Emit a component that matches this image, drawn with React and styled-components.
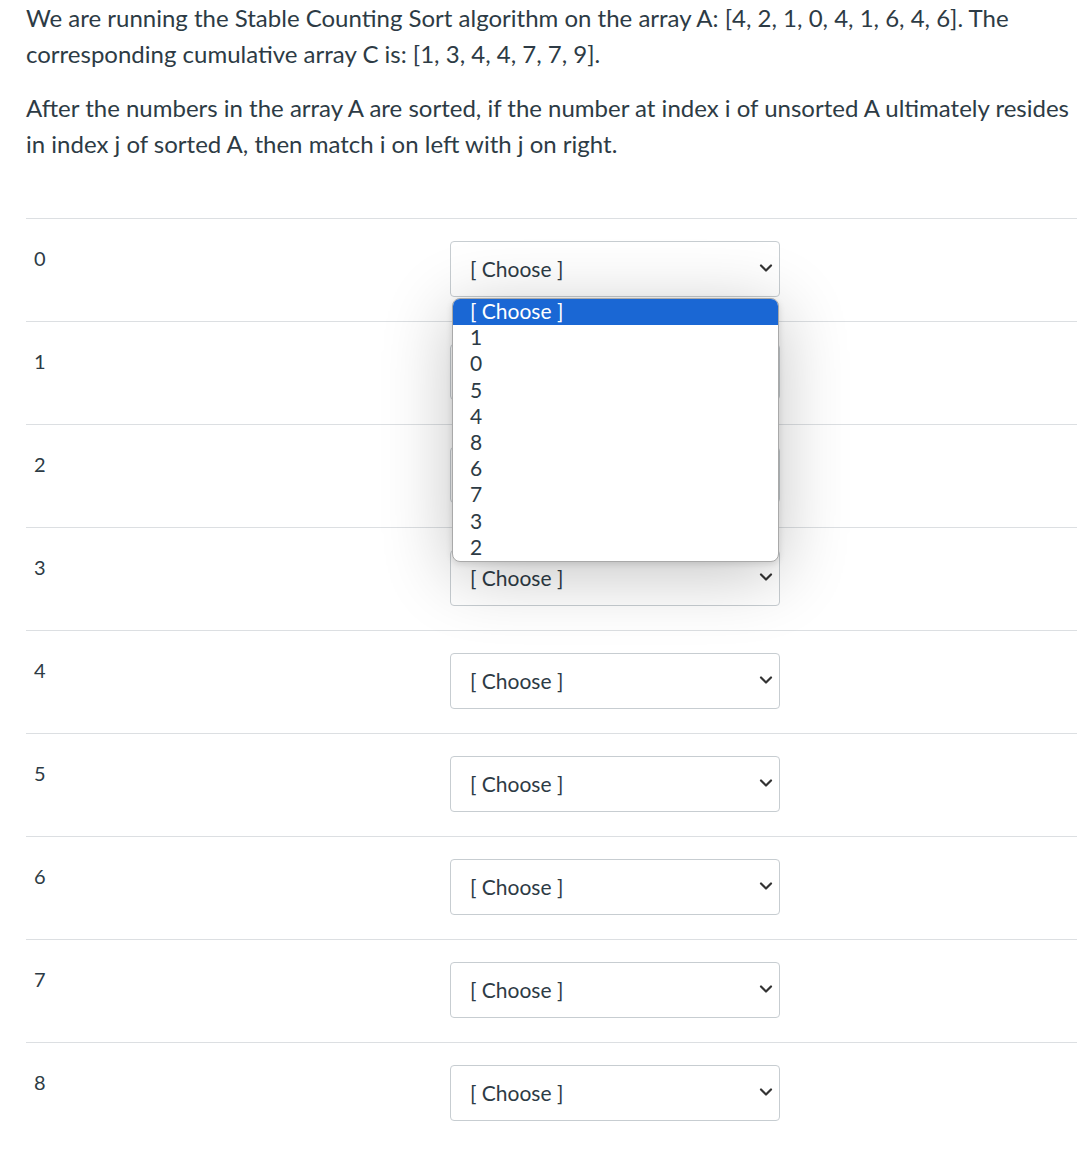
import React from "react";
import styled, { createGlobalStyle } from "styled-components";

const Global = createGlobalStyle`
  html, body { margin: 0; padding: 0; background: #fff; }
  body { font-family: Lato, "Noto Sans", sans-serif; color: #2d3b45; }
`;

const Page = styled.div`
  padding: 0 0 0 26px;
  overflow: hidden;
  height: 1172px;
  box-sizing: border-box;
`;

const Para = styled.p`
  margin: 0 0 18px 0;
  font-size: 24px;
  line-height: 36px;
`;

const Question = styled.div`
  padding-right: 4px;
`;

const List = styled.div`
  margin-top: 56px;
`;

const Row = styled.div`
  display: flex;
  align-items: flex-start;
  border-top: 1px solid #dcdfe2;
  height: 102px;
`;

const Label = styled.div`
  width: 416px;
  padding: 25px 0 0 8px;
  font-size: 20px;
  line-height: 28px;
`;

const SelectWrap = styled.div`
  position: relative;
  margin-top: 22px;
`;

const SelectBox = styled.div`
  width: 330px;
  height: 56px;
  box-sizing: border-box;
  border: 1px solid #c7cdd1;
  border-radius: 4px;
  background: #fff;
  display: flex;
  align-items: center;
  justify-content: space-between;
  padding: 0 6px 2px 19px;
  font-size: 21px;
  color: #2d3b45;
`;

const Chevron = () => (
  <svg width="14" height="10" viewBox="0 0 14 10">
    <path d="M2 2.5 L7 7.5 L12 2.5" fill="none" stroke="#333" strokeWidth="2.2" strokeLinecap="round" strokeLinejoin="round" />
  </svg>
);

const Menu = styled.ul`
  position: absolute;
  top: 57px;
  left: 2px;
  width: 327px;
  box-sizing: border-box;
  margin: 0;
  padding: 0;
  list-style: none;
  background: #fff;
  border: 1px solid #a9a9a9;
  border-radius: 8px;
  overflow: hidden;
  box-shadow: 0 12px 70px rgba(0, 0, 0, 0.24), 0 2px 6px rgba(0, 0, 0, 0.12);
  z-index: 10;
`;

const Option = styled.li`
  height: 26.2px;
  line-height: 24px;
  padding-left: 17px;
  font-size: 21px;
  color: ${(p) => (p.$active ? "#fff" : "#2d3b45")};
  background: ${(p) => (p.$active ? "#1a67d4" : "transparent")};
`;

const options = ["[ Choose ]", "1", "0", "5", "4", "8", "6", "7", "3", "2"];

export default function App() {
  return (
    <>
      <Global />
      <Page>
        <Question>
          <Para>
            We are running the Stable Counting Sort algorithm on the array A: [4, 2, 1, 0, 4, 1, 6, 4, 6]. The corresponding cumulative array C is: [1, 3, 4, 4, 7, 7, 9].
          </Para>
          <Para>
            After the numbers in the array A are sorted, if the number at index i of unsorted A ultimately resides in index j of sorted A, then match i on left with j on right.
          </Para>
        </Question>
        <List>
          {[0, 1, 2, 3, 4, 5, 6, 7, 8].map((i) => (
            <Row key={i}>
              <Label>{i}</Label>
              <SelectWrap>
                <SelectBox>
                  <span>[ Choose ]</span>
                  <Chevron />
                </SelectBox>
                {i === 0 && (
                  <Menu>
                    {options.map((o, k) => (
                      <Option key={k} $active={k === 0}>
                        {o}
                      </Option>
                    ))}
                  </Menu>
                )}
              </SelectWrap>
            </Row>
          ))}
        </List>
      </Page>
    </>
  );
}
